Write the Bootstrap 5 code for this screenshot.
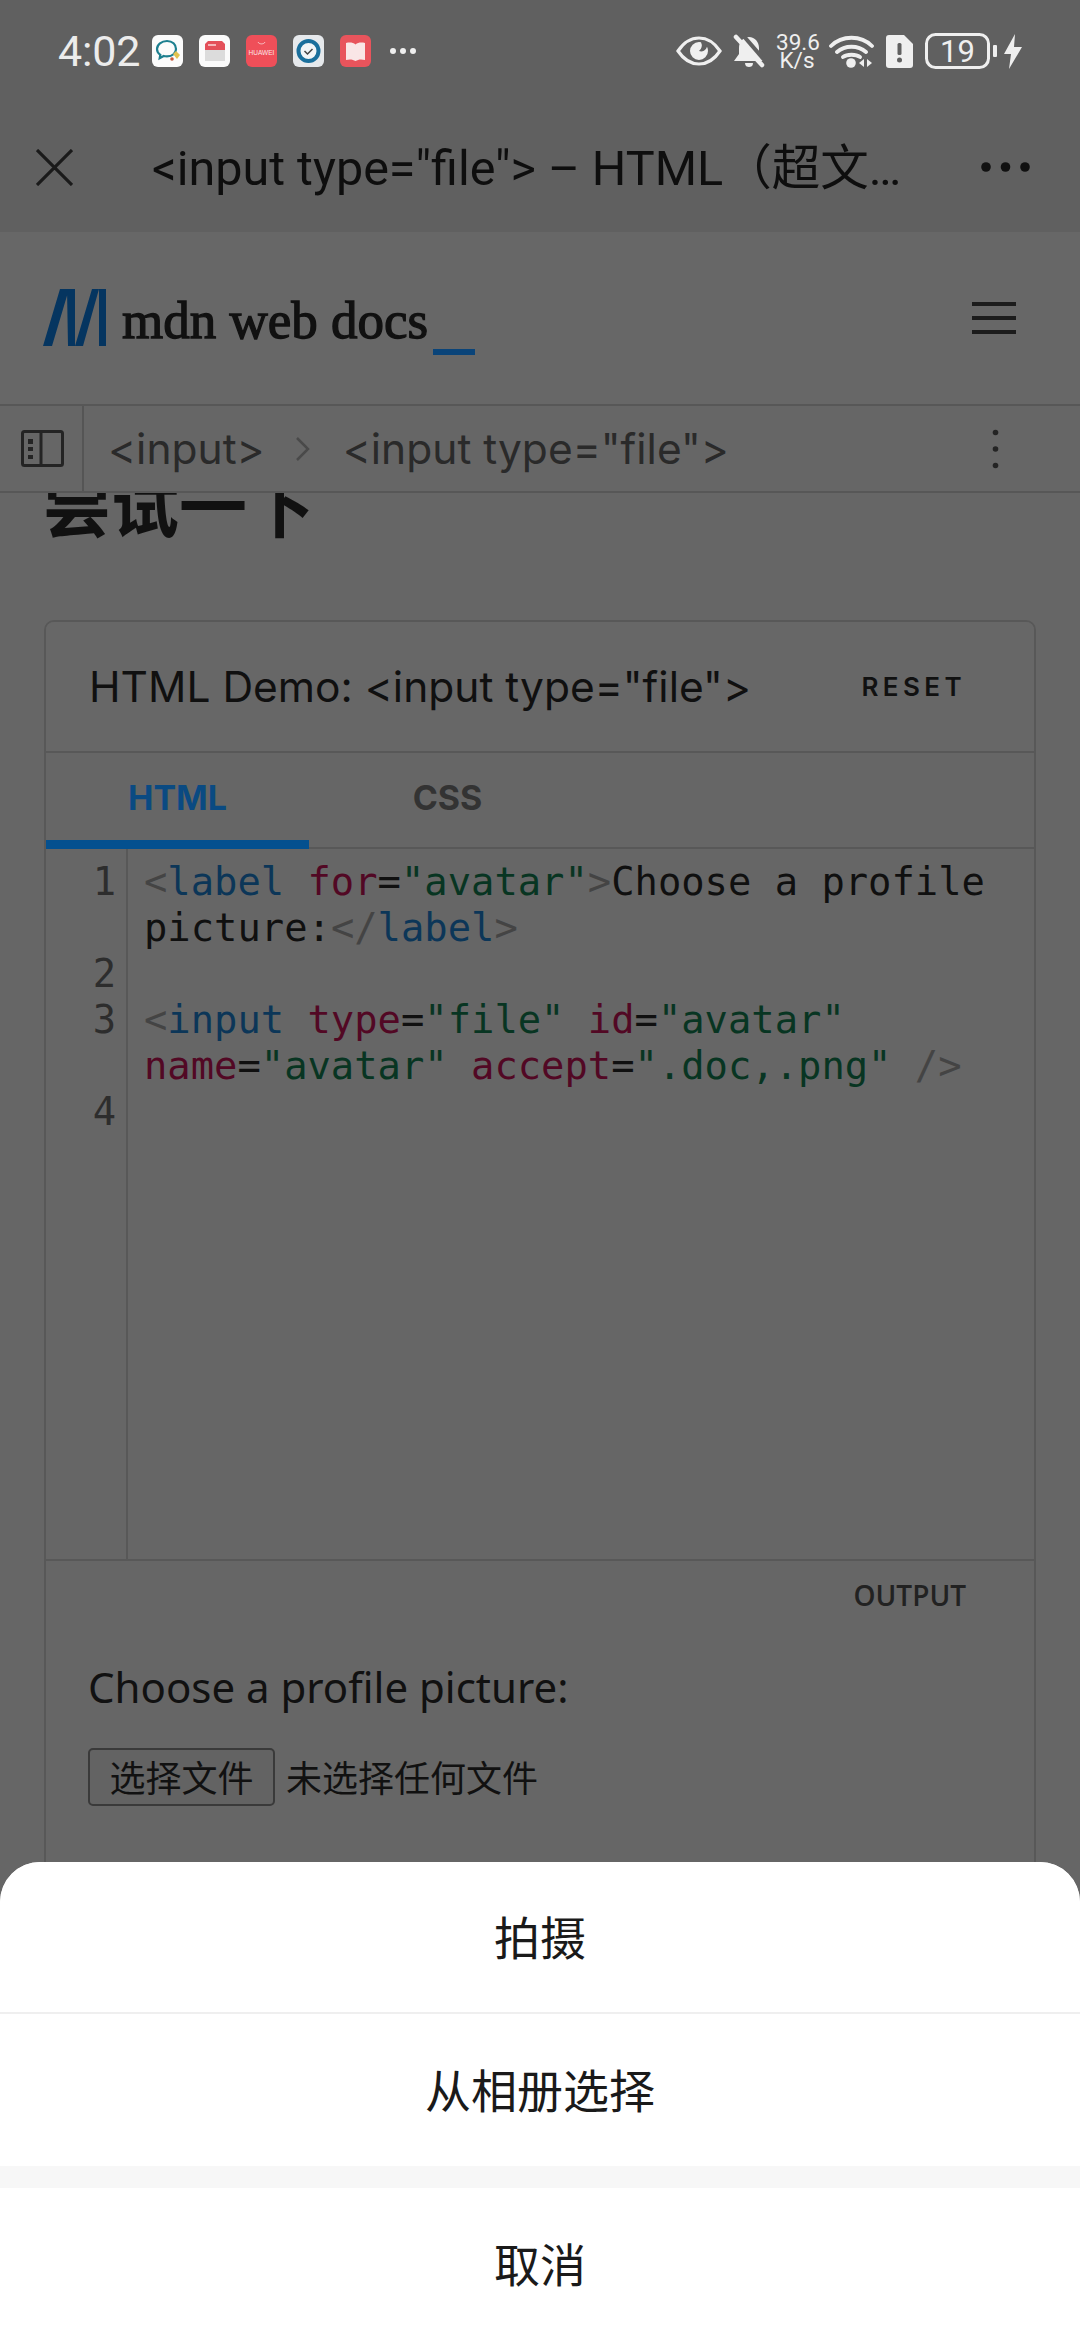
<!DOCTYPE html>
<html lang="zh-CN">
<head>
<meta charset="utf-8">
<title>input type file</title>
<link rel="stylesheet" href="https://cdn.jsdelivr.net/npm/bootstrap@5.3.0/dist/css/bootstrap.min.css">
<style>
html,body{margin:0;background:#666;}
.shell{width:1080px;height:2340px;overflow:hidden;position:relative;font-family:Inter,"Noto Sans CJK SC",sans-serif;color:#101010;background:#666;}
.appbar{background:#606060;height:232px;flex:none;}
.statusrow{height:102px;padding:0 58px;}
.clock{font-family:Roboto,sans-serif;font-size:43px;color:#ececec;width:94px;letter-spacing:-.2px;}
.noti{gap:16px;}
.noti svg{display:block;width:31px;height:32px;}
.moredots{margin-left:19px;width:26px;}
.sys{gap:0;color:#efefef;}
.speed{font-family:Roboto,sans-serif;font-size:22.5px;line-height:18px;color:#efefef;text-align:center;width:42px;margin:0 11px;}
.titlerow{height:130px;padding:0 50px 0 36px;}
.titletext{font-family:Roboto,"Noto Sans CJK SC",sans-serif;font-size:48.5px;margin:4px 0 0 79px;color:#0e0e0e;white-space:nowrap;line-height:1.2;}
.mdnhead{height:174px;flex:none;background:#676767;border-bottom:2px solid #575757;padding:0 64px 0 43px;}
.wordmark{font-family:"Liberation Serif",serif;font-size:53px;font-weight:400;-webkit-text-stroke:1.3px #111;margin:4px 0 0 15px;color:#111;line-height:1;}
.cursorbar{width:42px;height:6px;background:#0a4479;margin-left:5px;align-self:flex-end;margin-bottom:-8px;}
.crumbs{height:87px;flex:none;background:#666;border-bottom:2px solid #575757;font-size:42.5px;color:#2a2a2a;position:relative;z-index:2;}
.crumbside{width:84px;height:100%;border-right:2px solid #555;padding-left:21px;}
.crumbtext{padding-left:24px;white-space:nowrap;}
.crumbchev{margin:0 33px 0 31px;}
.crumbmore{margin-left:auto;margin-right:81px;}
.pagebody{padding:0 44px;flex:1 1 auto;min-height:0;}
.tryhead{font-family:"Noto Sans CJK SC",sans-serif;font-weight:700;font-size:68px;line-height:76px;margin:-28px 0 0 -1px;color:#111;}
.democard{margin-top:79px;background:#666;border:2px solid #585858;border-radius:10px;color:#101010;height:1300px;overflow:hidden;}
.demohead{height:131px;padding:0 68px 0 43px;border-bottom:2px solid #585858;background:#676767;}
.demotitle{font-size:42.5px;font-family:Inter,sans-serif;white-space:nowrap;}
.resetbtn{font-family:Inter,sans-serif;font-weight:600;font-size:26px;letter-spacing:4.4px;color:#111;padding:0;border:0;background:none;}
.tabbar{height:96px;border-bottom:2px solid #585858;flex-wrap:nowrap;}
.tabbar .nav-link{width:263px;height:96px;padding:2px 0 0;border-radius:0;font-family:Inter,sans-serif;font-weight:700;font-size:34px;color:#333;background:none;border-bottom:9px solid transparent;display:flex;align-items:center;justify-content:center;}
.tabbar .nav-item + .nav-item .nav-link{width:277px;}
.tabbar .nav-link.active{color:#0a4a82;border-bottom-color:#04508f;background:none;}
.editor{height:712px;border-bottom:2px solid #585858;font-family:"DejaVu Sans Mono",monospace;font-size:38.8px;line-height:46px;}
.gutter{width:82px;border-right:2px solid #585858;padding:10px 10px 0 0;text-align:right;color:#2d2d2d;}
.codecol{padding:10px 0 0 16px;white-space:pre;color:#101010;}
.tg{color:#0c3658;}.at{color:#520824;}.st{color:#083522;}.pn{color:#444;}
.outbar{height:74px;padding:0 68px 6px 0;}
.outlabel{font-family:"Open Sans",sans-serif;font-weight:600;font-size:28px;color:#222;}
.outbody{padding:0 42px;}
.pickhead{font-family:"Noto Sans",sans-serif;font-size:42px;line-height:54px;margin:25px 0 0;color:#111;}
.pickrow{margin-top:34px;font-family:"Noto Sans CJK SC",sans-serif;font-size:36px;color:#111;}
.pickbtn{width:187px;height:58px;padding:0 0 3px;border:2px solid #3a3a3a;border-radius:5px;background:#636363;font-size:36px;color:#111;line-height:1;}
.pickstate{margin-left:11px;padding-bottom:3px;}
.scrimsheet{position:absolute;left:0;right:0;bottom:0;height:478px;background:#f7f7f7;border-radius:40px 40px 0 0;overflow:hidden;z-index:5;font-family:"Noto Sans CJK SC",sans-serif;}
.sheetlist .list-group-item{height:152px;background:#fff;border:0;border-bottom:2px solid #efefef;font-size:46px;color:#1a1a1a;text-align:center;padding:0 0 3px;display:flex;align-items:center;justify-content:center;}
.sheetgap{height:22px;background:#f7f7f7;}
.cancelrow{height:152px;background:#fff;font-size:46px;color:#1a1a1a;border:0;width:100%;padding:0 0 3px;}
</style>
</head>
<body>
<div class="shell d-flex flex-column">

  <div class="appbar">
    <div class="statusrow d-flex align-items-center">
      <span class="clock">4:02</span>
      <div class="noti d-flex align-items-center">
        <svg viewBox="0 0 31 32"><rect width="31" height="32" rx="6" fill="#fbfbfb"/><path d="M15 6c-5.500 0-10 3.500-10 8 0 2.500 1.300 4.500 3.300 5.800l-.6 3.400 4-2.200c1 .3 2.200.4 3.300.4 5.500 0 9-3.200 9-7.400 0-4.500-3.500-8-9-8z" fill="none" stroke="#1d7f8f" stroke-width="2.200"/><path d="M21 19l3-3 4 4-3 4z" fill="#e2c24f"/><circle cx="20" cy="24" r="1.800" fill="#c9583a"/></svg>
        <svg viewBox="0 0 31 32"><rect width="31" height="32" rx="6" fill="#fbfbfb"/><path d="M6 9l3-3h14l3 3v6H6z" fill="#e4505a"/><rect x="6" y="15" width="20" height="11" fill="#dcdcdc"/><rect x="9" y="9" width="8" height="2" fill="#f5b5b9"/></svg>
        <svg viewBox="0 0 31 32"><rect width="31" height="32" rx="6" fill="#ef4f59"/><path d="M12 7c1 2.500 6 2.500 7 0" stroke="#f8c8cb" stroke-width="1" fill="none"/><text x="15.500" y="20" font-size="6.500" font-family="Liberation Sans,sans-serif" fill="#fbe4e5" text-anchor="middle">HUAWEI</text></svg>
        <svg viewBox="0 0 31 32"><rect width="31" height="32" rx="6" fill="#e6e9ec"/><circle cx="15.500" cy="16" r="10" fill="#f2f5f7" stroke="#1a6f9c" stroke-width="4"/><path d="M11.500 16l3 3 5-5" fill="none" stroke="#444" stroke-width="1.500"/></svg>
        <svg viewBox="0 0 31 32"><rect width="31" height="32" rx="6" fill="#e8545c"/><path d="M6 8c4-1 7-.5 9.500 1.500C18 7.500 21 7 25 8v17c-4-1-7-.5-9.500 1C13 24.500 10 24 6 25z" fill="#f9e6e6"/></svg>
      </div>
      <svg class="moredots" height="8" viewBox="0 0 26 8"><circle cx="3" cy="4" r="3" fill="#efefef"/><circle cx="13" cy="4" r="3" fill="#efefef"/><circle cx="23" cy="4" r="3" fill="#efefef"/></svg>
      <div class="sys d-flex align-items-center ms-auto">
        <svg width="46" height="30" viewBox="0 0 46 30"><path d="M2 15C8 6 15 2 23 2s15 4 21 13c-6 9-13 13-21 13S8 24 2 15z" fill="none" stroke="#efefef" stroke-width="3.200"/><path d="M23 6a9 9 0 1 0 9 9c0-1.500-.3-3-1-4.200a6 6 0 0 1-8 4.200 7 7 0 0 0 2-8.800A9 9 0 0 0 23 6z" fill="#efefef"/></svg>
        <svg width="32" height="34" viewBox="0 0 32 34" style="margin-left:11px"><path d="M16 3c-6 0-10 5-10 11v6l-5 7h30l-5-7v-6c0-6-4-11-10-11z" fill="#efefef"/><path d="M12 29h8c0 3-2 4-4 4s-4-1-4-4z" fill="#efefef"/><path d="M8 -1l25 29" stroke="#606060" stroke-width="4"/><path d="M3 3l26 28" stroke="#efefef" stroke-width="4.500" stroke-linecap="round"/></svg>
        <div class="speed"><div>39.6</div><div>K/s</div></div>
        <svg width="45" height="33" viewBox="0 0 45 33"><path d="M2 11c11-11 30-11 41 0M8 17c8-7 21-7 29 0M14 22c4-3 13-3 17 0" fill="none" stroke="#efefef" stroke-width="3.800" stroke-linecap="round"/><circle cx="22" cy="28" r="4.800" fill="#efefef"/><path d="M35 24l-5 4 5 4zM38 24l5 4-5 4z" fill="#efefef"/></svg>
        <svg style="margin-left:12px" width="27" height="33" viewBox="0 0 27 33"><path d="M3 0h15l9 9v21a3 3 0 0 1-3 3H3a3 3 0 0 1-3-3V3a3 3 0 0 1 3-3z" fill="#efefef"/><rect x="11.500" y="8" width="4" height="12" rx="1.500" fill="#606060"/><circle cx="13.500" cy="25" r="2.500" fill="#606060"/></svg>
        <svg style="margin-left:12px" width="65" height="36" viewBox="0 0 65 36"><rect x="1.500" y="1.500" width="62" height="33" rx="9" fill="none" stroke="#efefef" stroke-width="3"/><text x="32.500" y="29" font-size="31" font-family="Roboto,sans-serif" fill="#efefef" text-anchor="middle">19</text></svg>
        <svg style="margin-left:3px" width="4" height="12" viewBox="0 0 4 12"><rect width="4" height="12" rx="1" fill="#efefef"/></svg>
        <svg style="margin-left:7px" width="18" height="35" viewBox="0 0 18 35"><path d="M11 0L0 20h7l-2 15L18 13h-8z" fill="#efefef"/></svg>
      </div>
    </div>
    <div class="titlerow d-flex align-items-center">
      <svg width="37" height="37" viewBox="0 0 37 37"><path d="M1 1l35 35M36 1L1 36" stroke="#1a1a1a" stroke-width="3.200" fill="none"/></svg>
      <span class="titletext">&lt;input type="file"&gt; – HTML（超文…</span>
      <svg class="ms-auto" width="49" height="10" viewBox="0 0 49 10"><circle cx="5" cy="5" r="4.800" fill="#111"/><circle cx="24.500" cy="5" r="4.800" fill="#111"/><circle cx="44" cy="5" r="4.800" fill="#111"/></svg>
    </div>
  </div>

  <header class="mdnhead navbar d-flex flex-nowrap align-items-center">
    <div class="d-flex align-items-center">
      <svg width="64" height="58" viewBox="0 0 64 58"><path d="M17 0h9L9 57H0zM24 0h8v57h-7zM49 0h7L40 57h-8zM56 0h7v57h-7z" fill="#053560"/></svg>
      <span class="wordmark">mdn web docs</span>
      <span class="cursorbar"></span>
    </div>
    <svg width="44" height="32" viewBox="0 0 44 32"><path d="M0 2h44M0 16h44M0 30h44" stroke="#1c1c1c" stroke-width="4"/></svg>
  </header>

  <nav class="crumbs d-flex align-items-center">
    <div class="crumbside d-flex align-items-center">
      <svg width="43" height="37" viewBox="0 0 43 37"><rect x="1.500" y="1.500" width="40" height="34" rx="2" fill="none" stroke="#242424" stroke-width="3"/><path d="M20 2v33" stroke="#242424" stroke-width="3"/><path d="M7 9h5v5H7zM7 17h5v4H7zM7 25h5v4H7z" fill="#242424"/></svg>
    </div>
    <div class="crumbtext d-flex align-items-center flex-grow-1">
      <span>&lt;input&gt;</span>
      <svg class="crumbchev" width="14" height="24" viewBox="0 0 14 24"><path d="M1 1l11 11L1 23" fill="none" stroke="#4a4a4a" stroke-width="2.500"/></svg>
      <span>&lt;input type="file"&gt;</span>
      <svg class="crumbmore" width="7" height="40" viewBox="0 0 7 40"><circle cx="3.500" cy="3.500" r="2.800" fill="#242424"/><circle cx="3.500" cy="20" r="2.800" fill="#242424"/><circle cx="3.500" cy="36.500" r="2.800" fill="#242424"/></svg>
    </div>
  </nav>

  <main class="pagebody">
    <h2 class="tryhead">尝试一下</h2>
    <section class="card democard">
      <div class="demohead d-flex align-items-center justify-content-between">
        <span class="demotitle">HTML Demo: &lt;input type="file"&gt;</span>
        <button class="btn resetbtn" type="button">RESET</button>
      </div>
      <ul class="nav tabbar">
        <li class="nav-item"><a class="nav-link active" href="#">HTML</a></li>
        <li class="nav-item"><a class="nav-link" href="#">CSS</a></li>
      </ul>
      <div class="editor d-flex">
        <div class="gutter"><div>1</div><div>&nbsp;</div><div>2</div><div>3</div><div>&nbsp;</div><div>4</div></div>
        <div class="codecol"><div><span class="pn">&lt;</span><span class="tg">label</span> <span class="at">for</span>=<span class="st">"avatar"</span><span class="pn">&gt;</span>Choose a profile</div><div>picture:<span class="pn">&lt;/</span><span class="tg">label</span><span class="pn">&gt;</span></div><div>&nbsp;</div><div><span class="pn">&lt;</span><span class="tg">input</span> <span class="at">type</span>=<span class="st">"file"</span> <span class="at">id</span>=<span class="st">"avatar"</span></div><div><span class="at">name</span>=<span class="st">"avatar"</span> <span class="at">accept</span>=<span class="st">".doc,.png"</span> <span class="pn">/&gt;</span></div></div>
      </div>
      <div class="outbar d-flex align-items-center justify-content-end"><span class="outlabel">OUTPUT</span></div>
      <div class="outbody">
        <p class="pickhead">Choose a profile picture:</p>
        <div class="pickrow d-flex align-items-center"><button class="pickbtn" type="button">选择文件</button><span class="pickstate">未选择任何文件</span></div>
      </div>
    </section>
  </main>

  <div class="scrimsheet">
    <div class="list-group list-group-flush sheetlist">
      <button type="button" class="list-group-item">拍摄</button>
      <button type="button" class="list-group-item">从相册选择</button>
    </div>
    <div class="sheetgap"></div>
    <button type="button" class="cancelrow">取消</button>
  </div>
</div>
<script src="https://cdn.jsdelivr.net/npm/bootstrap@5.3.0/dist/js/bootstrap.bundle.min.js"></script>
</body>
</html>
